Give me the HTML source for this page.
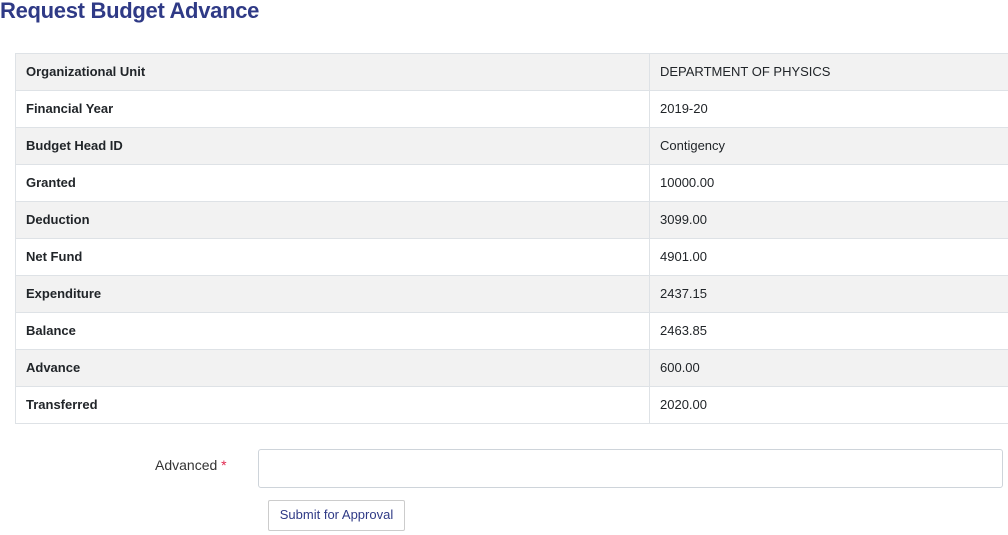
<!DOCTYPE html>
<html><head><style>
body{margin:0;background:#fff;font-family:"Liberation Sans",sans-serif;width:1008px;height:535px;overflow:hidden;position:relative;color:#212529}
h1{position:absolute;left:0;top:-2px;margin:0;font-size:22px;font-weight:bold;color:#2f3a86;letter-spacing:-0.3px}
table{position:absolute;left:15px;top:53px;border-collapse:collapse;width:1010px;font-size:13px}
td{height:37px;border:1px solid #dee2e6;padding:0 10px 2px 10px;box-sizing:border-box}
td:first-child{font-weight:bold;width:634px}
tr:nth-child(odd){background:#f2f2f2}
.lab{position:absolute;left:155px;top:457px;font-size:14px;color:#333}
.lab span{color:#e0284f}
.inp{position:absolute;left:258px;top:449px;width:743px;height:37px;border:1px solid #ced4da;border-radius:3px}
.btn{position:absolute;left:268px;top:500px;width:135px;height:29px;border:1px solid #ccc;border-radius:2px;font-size:13px;color:#2f3a86;text-align:center;line-height:28px}
</style></head><body>
<h1>Request Budget Advance</h1>
<table>
<tr><td>Organizational Unit</td><td>DEPARTMENT OF PHYSICS</td></tr>
<tr><td>Financial Year</td><td>2019-20</td></tr>
<tr><td>Budget Head ID</td><td>Contigency</td></tr>
<tr><td>Granted</td><td>10000.00</td></tr>
<tr><td>Deduction</td><td>3099.00</td></tr>
<tr><td>Net Fund</td><td>4901.00</td></tr>
<tr><td>Expenditure</td><td>2437.15</td></tr>
<tr><td>Balance</td><td>2463.85</td></tr>
<tr><td>Advance</td><td>600.00</td></tr>
<tr><td>Transferred</td><td>2020.00</td></tr>
</table>
<div class="lab">Advanced <span>*</span></div>
<div class="inp"></div>
<div class="btn">Submit for Approval</div>
</body></html>
